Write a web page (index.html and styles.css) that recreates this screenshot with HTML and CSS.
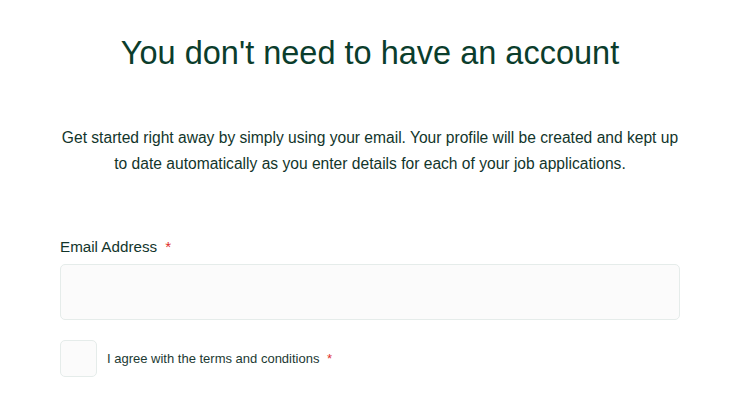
FILE: index.html
```html
<!DOCTYPE html>
<html>
<head>
<meta charset="utf-8">
<link rel="stylesheet" href="styles.css">
</head>
<body>
<main class="page">
  <h1 class="title">You don't need to have an account</h1>
  <p class="intro">Get started right away by simply using your email. Your profile will be created and kept up to date automatically as you enter details for each of your job applications.</p>
  <form class="form">
    <label class="field-label" for="email">Email Address <span class="req">*</span></label>
    <input class="input" id="email" type="email">
    <label class="agree">
      <span class="box"></span>
      <span class="agree-text">I agree with the terms and conditions <span class="req">*</span></span>
    </label>
  </form>
</main>
</body>
</html>
```
FILE: styles.css
```css
html, body {
  margin: 0;
  padding: 0;
  background: #ffffff;
}
body {
  font-family: "Liberation Sans", Arial, sans-serif;
  color: #12352b;
}
.page {
  width: 620px;
  margin-left: 60px;
  padding-top: 33px;
}
.title {
  margin: 0;
  text-align: center;
  font-weight: 400;
  font-size: 32.5px;
  line-height: 40px;
  color: #0b3d2c;
}
.intro {
  margin: 52px 0 0;
  text-align: center;
  font-size: 15.6px;
  line-height: 26px;
  color: #12352b;
}
.form {
  margin-top: 61px;
  display: flex;
  flex-direction: column;
}
.field-label {
  font-size: 15.2px;
  line-height: 18px;
  color: #12352b;
}
.req {
  color: #e0302c;
  margin-left: 4px;
}
.input {
  margin-top: 8px;
  height: 56px;
  box-sizing: border-box;
  border: 1px solid #e5ecea;
  border-radius: 5px;
  background: #fbfbfb;
  outline: none;
}
.agree {
  margin-top: 20px;
  display: flex;
  align-items: center;
  gap: 10px;
}
.box {
  width: 37px;
  height: 37px;
  box-sizing: border-box;
  border: 1px solid #e5ecea;
  border-radius: 5px;
  background: #fbfbfb;
}
.agree-text {
  font-size: 13px;
  color: #1c3a33;
}
```
